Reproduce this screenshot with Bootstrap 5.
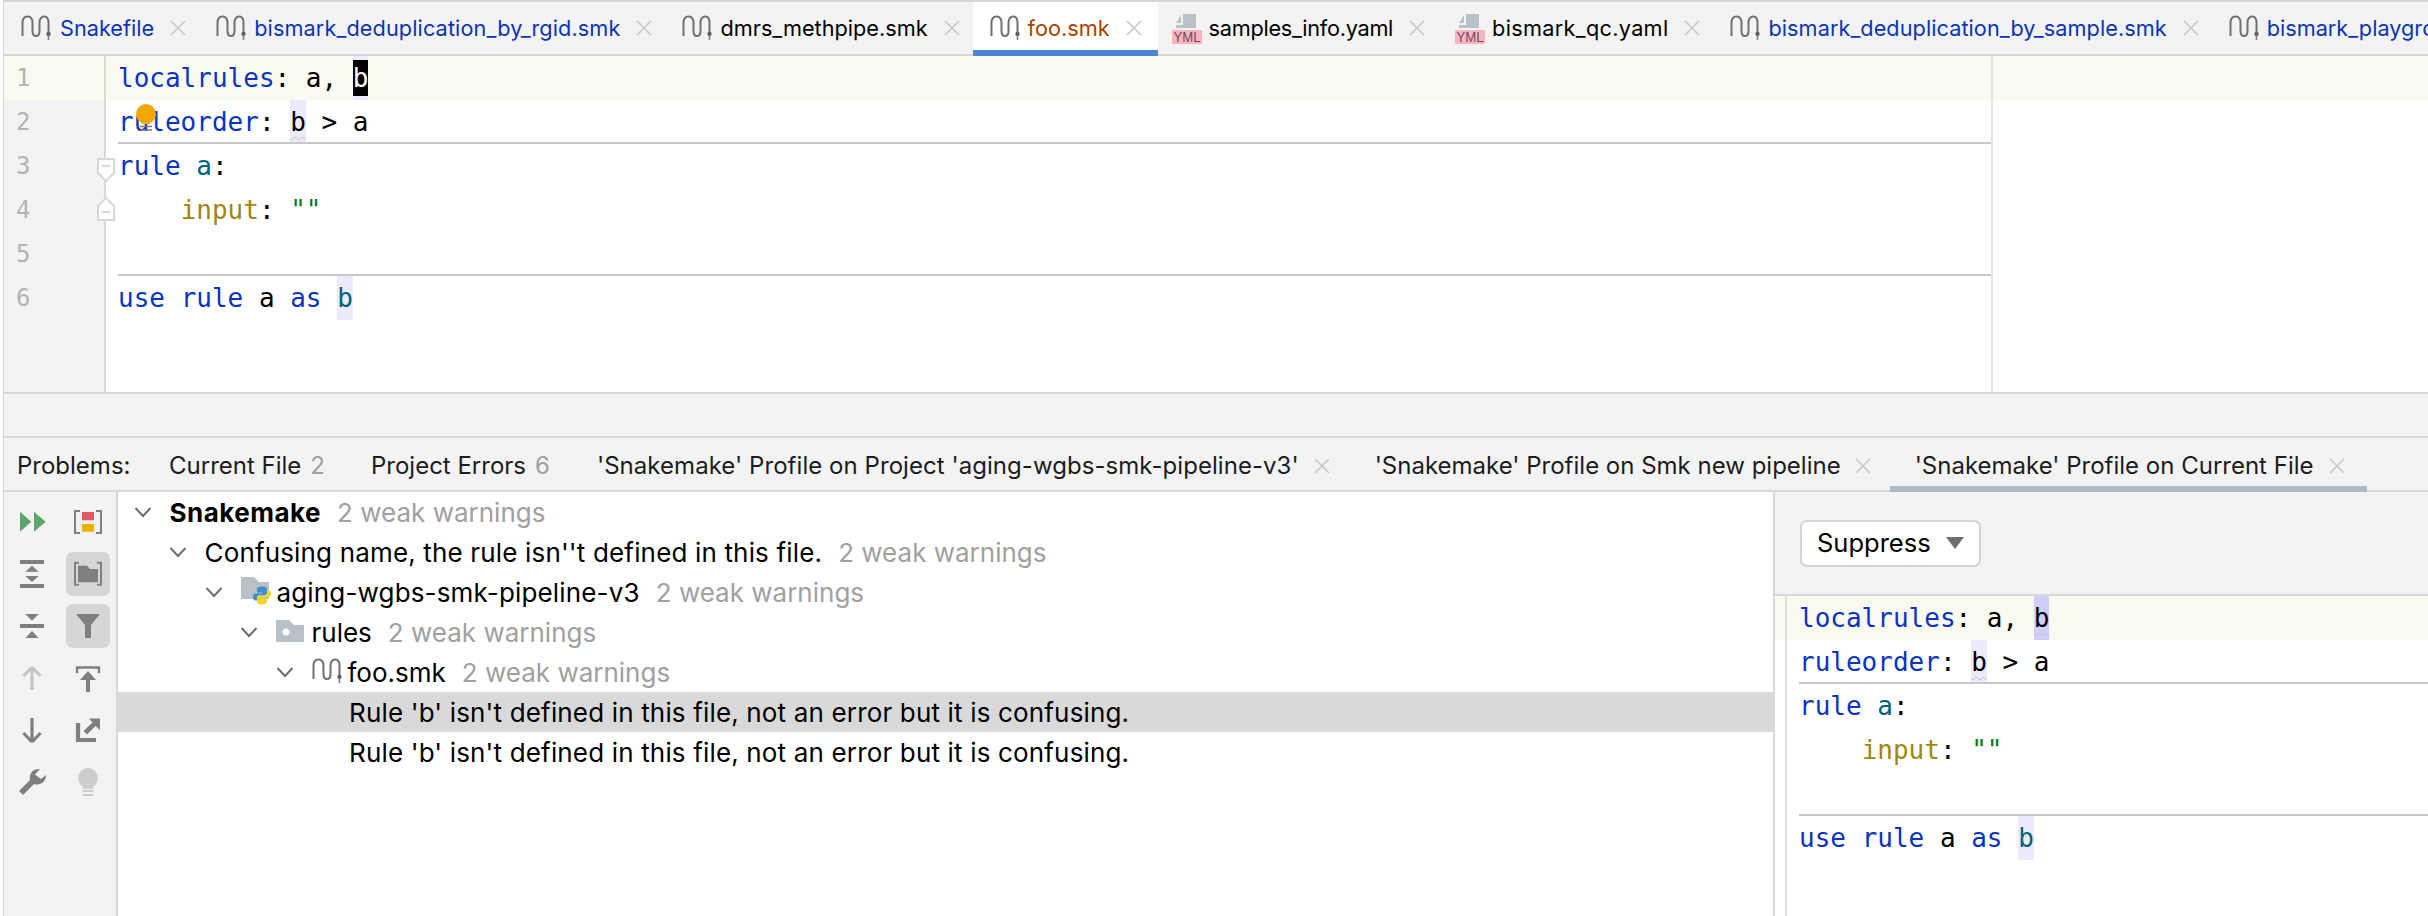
<!DOCTYPE html>
<html lang="en">
<head>
<meta charset="utf-8">
<title>foo.smk</title>
<link rel="stylesheet" href="https://cdn.jsdelivr.net/npm/bootstrap@5.3.0/dist/css/bootstrap.min.css">
<style>
html,body{height:100%;margin:0;background:#fff;overflow:hidden}
body{font-family:Inter,"Liberation Sans",sans-serif;font-size:26px;color:#000}
.ide-frame{height:916px;width:2425px;margin-left:3px;border-left:1px solid #d5d5d5;border-top:2px solid #d5d5d5;background:#f3f3f3}
.tabbar{height:54px;flex:none;box-shadow:inset 0 -2px 0 #d5d5d5;overflow:hidden;flex-wrap:nowrap;font-size:21.7px}
.filetab{display:flex;align-items:center;flex:none;height:54px;padding:0 15px 2px 15px;color:#000;white-space:nowrap}
.filetab:first-child{padding-left:17px}
.filetab.changed{color:#0a34b8}
.filetab.now{background:#fff;color:#a84300;border-bottom:6px solid #4a88d6;padding:4px 16px 0 17px;margin-left:-2px;margin-right:-1px}
.sp-a{letter-spacing:.1px}.sp-b{letter-spacing:-.27px}.sp-c{letter-spacing:.3px}.sp-d{letter-spacing:.05px}
.ficon{width:30px;height:26px;margin-right:8px;flex:none}
.filetab:first-child .ficon{margin-right:9px}
.yicon{width:30px;height:30px;margin-right:7px;flex:none;margin-top:2px}
.xmark{width:16px;height:16px;margin-left:16px;flex:none}
.editor-main{height:336px;flex:none;background:#fff;overflow:hidden}
.cline{display:flex;height:44px;flex:none}
.gnum{width:102px;flex:none;background:#f3f3f3;border-right:2px solid #d8d8d8;color:#b3b3b3;font:24px/44px "DejaVu Sans Mono",monospace;padding-left:12px}
.gmini{width:12px;flex:none;border-right:2px solid #dcdcdc;background:#fff}
.ccode{width:1887px;flex:none;border-right:2px solid #e4e4e4;padding-left:12px;box-sizing:border-box}
.ccode-b{flex:1 1 auto;padding-left:12px;min-width:0}
.cfill{flex:1 1 auto}
.ctext{height:44px;font:26px/44px "DejaVu Sans Mono",monospace;white-space:pre;color:#000;box-sizing:border-box}
.ctext.rule-sep{border-bottom:2px solid #c8c8c8}
.cline.curr .gnum,.cline.curr .gmini,.cline.curr .ccode,.cline.curr .ccode-b,.cline.curr .cfill{background:#fafaf0}
.crest{flex:1 1 auto;display:flex;min-height:0}
.k{color:#0a34c0}.t{color:#00627a}.y{color:#9e880d}.s{color:#067d17}
.hl{background:#edebfb;display:inline-block;height:42px}
.hl-tall{height:44px}
.hl-sel{background:#edebfb;display:inline-block;height:44px;position:relative;z-index:0;color:#fff}
.hl-sel::before{content:"";position:absolute;left:0;right:0;top:4px;height:36px;background:#000;z-index:-1}
.hl-strong{background:#cfcdfb;display:inline-block;height:44px}
.wavy{text-decoration:underline wavy #c2c2c2 1px;text-underline-offset:5px}
.bulb{position:absolute;left:130px;top:46px;width:24px;height:30px}
.foldmark{position:absolute;left:92px;width:20px;height:24px}
.gapband{height:46px;flex:none;border-top:2px solid #d8d8d8;border-bottom:2px solid #d8d8d8}
.probbar{height:54px;flex:none;box-shadow:inset 0 -2px 0 #d8d8d8;overflow:hidden;color:#1c1c1c;flex-wrap:nowrap;font-size:24px}
.plabel{padding:4px 0 2px 13px;width:165px;flex:none;display:flex;align-items:center;height:54px}
.ptab{display:flex;align-items:center;flex:none;height:54px;padding:4px 25px 2px 25px;white-space:nowrap}
.ptab.tight-a{padding-right:21px}
.ptab.tight-b{padding-right:22px}
.ptab.tight-c{padding-right:20px}
.ptab.tight-d{padding-right:19px}
.ptab.tight-d .xmark{margin-left:14px}
.ptab.now{border-bottom:6px solid #afb8c9;padding:8px 22px 0 25px}
.ptab .xmark{margin-left:15px}
.pcount{color:#a0a0a0;margin-left:9px}
.toolcol{width:114px;flex:none;border-right:2px solid #d8d8d8;display:grid;grid-template-columns:56px 56px;grid-auto-rows:52px;align-content:start;padding-top:4px;justify-items:center;align-items:center}
.toolb{width:44px;height:44px;display:flex;align-items:center;justify-content:center;border-radius:7px}
.toolb.on{background:#d6d6d6}
.toolb svg{width:32px;height:32px}
.treebox{width:1655px;flex:none;background:#fff}
.treeline{display:flex;align-items:center;height:40px;padding:0;border:0;border-radius:0;background:transparent;color:#000;white-space:nowrap;flex:none}
.treeline.sel{background:#d9d9d9}
.lv0{padding-left:16px}.lv1{padding-left:51px}.lv2{padding-left:87px}.lv3{padding-left:122px}.lv4{padding-left:158px}.lv5{padding-left:231px}
.chev{width:35.5px;flex:none;height:12px}
.chev svg{display:block;width:18px;height:12px}
.nicon{width:36px;height:28px;flex:none}
.nicon svg{display:block;width:30px;height:30px;margin-top:-1px}
.nicon .sn{width:30px;height:26px;margin-top:0}
.wk{color:#a0a0a0;margin-left:16px}
.longmsg{letter-spacing:.16px}
.treeline strong{letter-spacing:.5px}
.sidepanel{flex:1 1 auto;border-left:2px solid #d8d8d8;min-width:0}
.sidehead{height:104px;flex:none;border-bottom:2px solid #d8d8d8;padding-left:25px}
.suppress{height:47px;width:181px;border:2px solid #d3d3d3;border-radius:7px;background:#fff;color:#000;font-size:25.5px;padding:0 0 0 15px;display:flex;align-items:center;justify-content:flex-start}
.suppress::after{border-top:12px solid #6e6e6e;border-left:9px solid transparent;border-right:9px solid transparent;border-bottom:0;margin-left:15px;vertical-align:middle}
.sidecode{background:#fff;min-height:0}
</style>
</head>
<body>
<svg width="0" height="0" class="position-absolute">
<defs>
<symbol id="snk" viewBox="0 0 30 26"><path d="M1.5 21V8C1.5 4 3.5 1.5 6.5 1.5S11.5 4 11.5 8V16C11.5 19 13 21 15 21S18.5 19 18.5 16V8C18.5 4 20.5 1.5 23.5 1.5S27.5 4 27.5 8V19" fill="none" stroke="#707070" stroke-width="2"/><circle cx="27.5" cy="19" r="2.2" fill="#606060"/><path d="M27.5 20v5" stroke="#808080" stroke-width="1.6"/></symbol>
<symbol id="yml" viewBox="0 0 30 30"><path d="M11 0H24V14H4V11H11Z" fill="#b7c1c7"/><path d="M9 1V9H4Z" fill="#b7c1c7"/><rect x="0" y="16" width="30" height="14" fill="#ffb3c0"/><text x="15" y="28" text-anchor="middle" font-family="Liberation Sans,sans-serif" font-size="14" fill="#6e4a58" textLength="27" lengthAdjust="spacingAndGlyphs">YML</text></symbol>
<symbol id="xx" viewBox="0 0 16 16"><path d="M1 1L15 15M15 1L1 15" stroke="#c6cacd" stroke-width="1.7" fill="none"/></symbol>
<symbol id="chv" viewBox="0 0 18 12"><path d="M1.5 2L9 10L16.5 2" fill="none" stroke="#6e6e6e" stroke-width="2"/></symbol>
</defs>
</svg>
<div class="ide-frame d-flex flex-column">
  <nav class="tabbar nav">
    <div class="filetab changed"><svg class="ficon"><use href="#snk"/></svg><span>Snakefile</span><svg class="xmark"><use href="#xx"/></svg></div>
    <div class="filetab changed"><svg class="ficon"><use href="#snk"/></svg><span class="sp-a">bismark_deduplication_by_rgid.smk</span><svg class="xmark"><use href="#xx"/></svg></div>
    <div class="filetab"><svg class="ficon"><use href="#snk"/></svg><span>dmrs_methpipe.smk</span><svg class="xmark"><use href="#xx"/></svg></div>
    <div class="filetab now"><svg class="ficon"><use href="#snk"/></svg><span>foo.smk</span><svg class="xmark"><use href="#xx"/></svg></div>
    <div class="filetab"><svg class="yicon"><use href="#yml"/></svg><span class="sp-b">samples_info.yaml</span><svg class="xmark"><use href="#xx"/></svg></div>
    <div class="filetab"><svg class="yicon"><use href="#yml"/></svg><span class="sp-c">bismark_qc.yaml</span><svg class="xmark"><use href="#xx"/></svg></div>
    <div class="filetab changed"><svg class="ficon"><use href="#snk"/></svg><span class="sp-d">bismark_deduplication_by_sample.smk</span><svg class="xmark"><use href="#xx"/></svg></div>
    <div class="filetab changed"><svg class="ficon"><use href="#snk"/></svg><span>bismark_playground.smk</span><svg class="xmark"><use href="#xx"/></svg></div>
  </nav>

  <div class="editor-main d-flex flex-column position-relative">
    <div class="cline curr"><div class="gnum">1</div><div class="ccode"><div class="ctext"><span class="k">localrules</span>: a, <span class="hl-sel">b</span></div></div><div class="cfill"></div></div>
    <div class="cline"><div class="gnum">2</div><div class="ccode"><div class="ctext rule-sep"><span class="k">ruleorder</span>: <span class="hl"><span class="wavy">b</span></span> &gt; a</div></div><div class="cfill"></div></div>
    <div class="cline"><div class="gnum">3</div><div class="ccode"><div class="ctext"><span class="k">rule</span> <span class="t">a</span>:</div></div><div class="cfill"></div></div>
    <div class="cline"><div class="gnum">4</div><div class="ccode"><div class="ctext">    <span class="y">input</span>: <span class="s">""</span></div></div><div class="cfill"></div></div>
    <div class="cline"><div class="gnum">5</div><div class="ccode"><div class="ctext rule-sep"></div></div><div class="cfill"></div></div>
    <div class="cline"><div class="gnum">6</div><div class="ccode"><div class="ctext"><span class="k">use</span> <span class="k">rule</span> a <span class="k">as</span> <span class="hl hl-tall t">b</span></div></div><div class="cfill"></div></div>
    <div class="crest"><div class="gnum"></div><div class="ccode"></div></div>
    <svg class="bulb" viewBox="0 0 24 30"><circle cx="12" cy="12" r="10" fill="#f0a800"/><path d="M6 17H18L16 22H8Z" fill="#f0a800"/><path d="M6 24.5H18M6 28H18" stroke="#7a7a7a" stroke-width="1.6"/></svg>
    <svg class="foldmark" style="top:102px" viewBox="0 0 20 24"><path d="M2 1H18V15L10 23L2 15Z" fill="#fff" stroke="#d8d8d8" stroke-width="2"/><path d="M6 8H14" stroke="#d8d8d8" stroke-width="2"/></svg>
    <svg class="foldmark" style="top:141px" viewBox="0 0 20 24"><path d="M2 23H18V9L10 1L2 9Z" fill="#fff" stroke="#d8d8d8" stroke-width="2"/><path d="M6 15H14" stroke="#d8d8d8" stroke-width="2"/></svg>
  </div>

  <div class="gapband"></div>

  <nav class="probbar nav">
    <div class="plabel">Problems:</div>
    <div class="ptab ps-0 tight-a"><span>Current File</span><span class="pcount">2</span></div>
    <div class="ptab tight-b"><span>Project Errors</span><span class="pcount">6</span></div>
    <div class="ptab tight-c"><span class="sp-d">'Snakemake' Profile on Project 'aging-wgbs-smk-pipeline-v3'</span><svg class="xmark"><use href="#xx"/></svg></div>
    <div class="ptab tight-d"><span>'Snakemake' Profile on Smk new pipeline</span><svg class="xmark"><use href="#xx"/></svg></div>
    <div class="ptab now"><span>'Snakemake' Profile on Current File</span><svg class="xmark"><use href="#xx"/></svg></div>
  </nav>

  <div class="d-flex flex-grow-1" style="min-height:0">
    <div class="toolcol">
      <div class="toolb"><svg viewBox="0 0 32 32"><path d="M4 5.7V25.7L15.3 15.7ZM18 5.7V25.7L29.7 15.7Z" fill="#59a869"/></svg></div>
      <div class="toolb"><svg viewBox="0 0 32 32"><path d="M8 5H3V27H8M24 5H29V27H24" fill="none" stroke="#7f7f7f" stroke-width="2"/><rect x="10" y="6" width="12" height="8.3" fill="#e55765"/><rect x="10" y="18" width="12" height="7.7" fill="#f2ae00"/></svg></div>
      <div class="toolb"><svg viewBox="0 0 32 32"><path d="M4 2H28V6H4ZM4 26H28V30H4ZM16 7.7L22.7 13.7H9.3ZM9.3 18H22.7L16 24Z" fill="#7f7f7f"/></svg></div>
      <div class="toolb on"><svg viewBox="0 0 32 32"><path d="M7 4.7H3V26.7H7M25 4.7H29V26.7H25" fill="none" stroke="#7f7f7f" stroke-width="2"/><path d="M6 7.7H15L18 11H26V24.3H6Z" fill="#7f7f7f"/></svg></div>
      <div class="toolb"><svg viewBox="0 0 32 32"><path d="M4 14H28V18H4ZM9.3 4H22.7L16 10.7ZM16 21L22.7 28H9.3Z" fill="#7f7f7f"/></svg></div>
      <div class="toolb on"><svg viewBox="0 0 32 32"><path d="M4 4H28L19 15V28H13V15Z" fill="#7f7f7f"/></svg></div>
      <div class="toolb"><svg viewBox="0 0 32 32"><path d="M16 5L7.5 14M16 5L24.5 14M16 5V28" fill="none" stroke="#c6c6c6" stroke-width="3.2"/></svg></div>
      <div class="toolb"><svg viewBox="0 0 32 32"><path d="M5 11V5.5H27V11" fill="none" stroke="#7f7f7f" stroke-width="2.4"/><path d="M16 9L24 18H18V30H14V18H8Z" fill="#7f7f7f"/></svg></div>
      <div class="toolb"><svg viewBox="0 0 32 32"><path d="M16 28L7.5 19M16 28L24.5 19M16 28V4" fill="none" stroke="#7f7f7f" stroke-width="3.2"/></svg></div>
      <div class="toolb"><svg viewBox="0 0 32 32"><path d="M6 9V26H24" fill="none" stroke="#7f7f7f" stroke-width="4.2"/><path d="M28 4.5H17L20.5 8.5L11.5 17L15 20.5L23.5 12L28 16Z" fill="#7f7f7f"/></svg></div>
      <div class="toolb"><svg viewBox="0 0 32 32"><path d="M3 25L14 14C12.5 8 17 2 24 3L19 8.5L25 13L30 9C30 16 24 20 18 18L7 29Z" fill="#7f7f7f"/></svg></div>
      <div class="toolb"><svg viewBox="0 0 32 32"><circle cx="16" cy="12" r="10" fill="#cdcdcd"/><path d="M10 17H22L21 23H11Z" fill="#cdcdcd"/><path d="M10.500 25H21.500M10.500 29H21.500" stroke="#cdcdcd" stroke-width="2"/></svg></div>
    </div>

    <div class="treebox list-group list-group-flush">
      <div class="treeline list-group-item lv0"><span class="chev"><svg><use href="#chv"/></svg></span><strong>Snakemake</strong><span class="wk">2 weak warnings</span></div>
      <div class="treeline list-group-item lv1"><span class="chev"><svg><use href="#chv"/></svg></span><span class="longmsg">Confusing name, the rule isn''t defined in this file.</span><span class="wk">2 weak warnings</span></div>
      <div class="treeline list-group-item lv2"><span class="chev"><svg><use href="#chv"/></svg></span><span class="nicon"><svg viewBox="0 0 30 30"><path d="M0 0H13L18 5H28V22H0Z" fill="#b7c1c7"/><g transform="translate(12 9.500)"><path d="M9 0C5 0 4 1.500 4 3.500V6H9.500V7H2.500C1 7 0 8 0 10.500S1 14 2.500 14H4V11.500C4 9.500 5.500 8.500 7 8.500H11.500C13 8.500 14 7.500 14 6V3.500C14 1.500 13 0 9 0Z" fill="#3d8fd0"/><path transform="rotate(180 9 9)" d="M9 0C5 0 4 1.500 4 3.500V6H9.500V7H2.500C1 7 0 8 0 10.500S1 14 2.500 14H4V11.500C4 9.500 5.500 8.500 7 8.500H11.500C13 8.500 14 7.500 14 6V3.500C14 1.500 13 0 9 0Z" fill="#f7d51d"/></g></svg></span><span class="longmsg">aging-wgbs-smk-pipeline-v3</span><span class="wk">2 weak warnings</span></div>
      <div class="treeline list-group-item lv3"><span class="chev"><svg><use href="#chv"/></svg></span><span class="nicon"><svg viewBox="0 0 30 30"><path d="M0 3H13L18 8H28V25H0Z" fill="#b7c1c7"/><circle cx="10" cy="15" r="3.500" fill="#fff"/></svg></span><span>rules</span><span class="wk">2 weak warnings</span></div>
      <div class="treeline list-group-item lv4"><span class="chev"><svg><use href="#chv"/></svg></span><span class="nicon"><svg class="sn"><use href="#snk"/></svg></span><span>foo.smk</span><span class="wk">2 weak warnings</span></div>
      <div class="treeline list-group-item sel lv5"><span class="longmsg">Rule 'b' isn't defined in this file, not an error but it is confusing.</span></div>
      <div class="treeline list-group-item lv5"><span class="longmsg">Rule 'b' isn't defined in this file, not an error but it is confusing.</span></div>
    </div>

    <div class="sidepanel d-flex flex-column">
      <div class="sidehead d-flex align-items-center"><button type="button" class="btn suppress dropdown-toggle">Suppress</button></div>
      <div class="sidecode flex-grow-1 d-flex flex-column">
        <div class="cline curr"><div class="gmini"></div><div class="ccode-b"><div class="ctext"><span class="k">localrules</span>: a, <span class="hl-strong"><span class="wavy">b</span></span></div></div></div>
        <div class="cline"><div class="gmini"></div><div class="ccode-b"><div class="ctext rule-sep"><span class="k">ruleorder</span>: <span class="hl"><span class="wavy">b</span></span> &gt; a</div></div></div>
        <div class="cline"><div class="gmini"></div><div class="ccode-b"><div class="ctext"><span class="k">rule</span> <span class="t">a</span>:</div></div></div>
        <div class="cline"><div class="gmini"></div><div class="ccode-b"><div class="ctext">    <span class="y">input</span>: <span class="s">""</span></div></div></div>
        <div class="cline"><div class="gmini"></div><div class="ccode-b"><div class="ctext rule-sep"></div></div></div>
        <div class="cline"><div class="gmini"></div><div class="ccode-b"><div class="ctext"><span class="k">use</span> <span class="k">rule</span> a <span class="k">as</span> <span class="hl hl-tall t">b</span></div></div></div>
        <div class="crest"><div class="gmini"></div></div>
      </div>
    </div>
  </div>
</div>
<script src="https://cdn.jsdelivr.net/npm/bootstrap@5.3.0/dist/js/bootstrap.bundle.min.js"></script>
</body>
</html>
